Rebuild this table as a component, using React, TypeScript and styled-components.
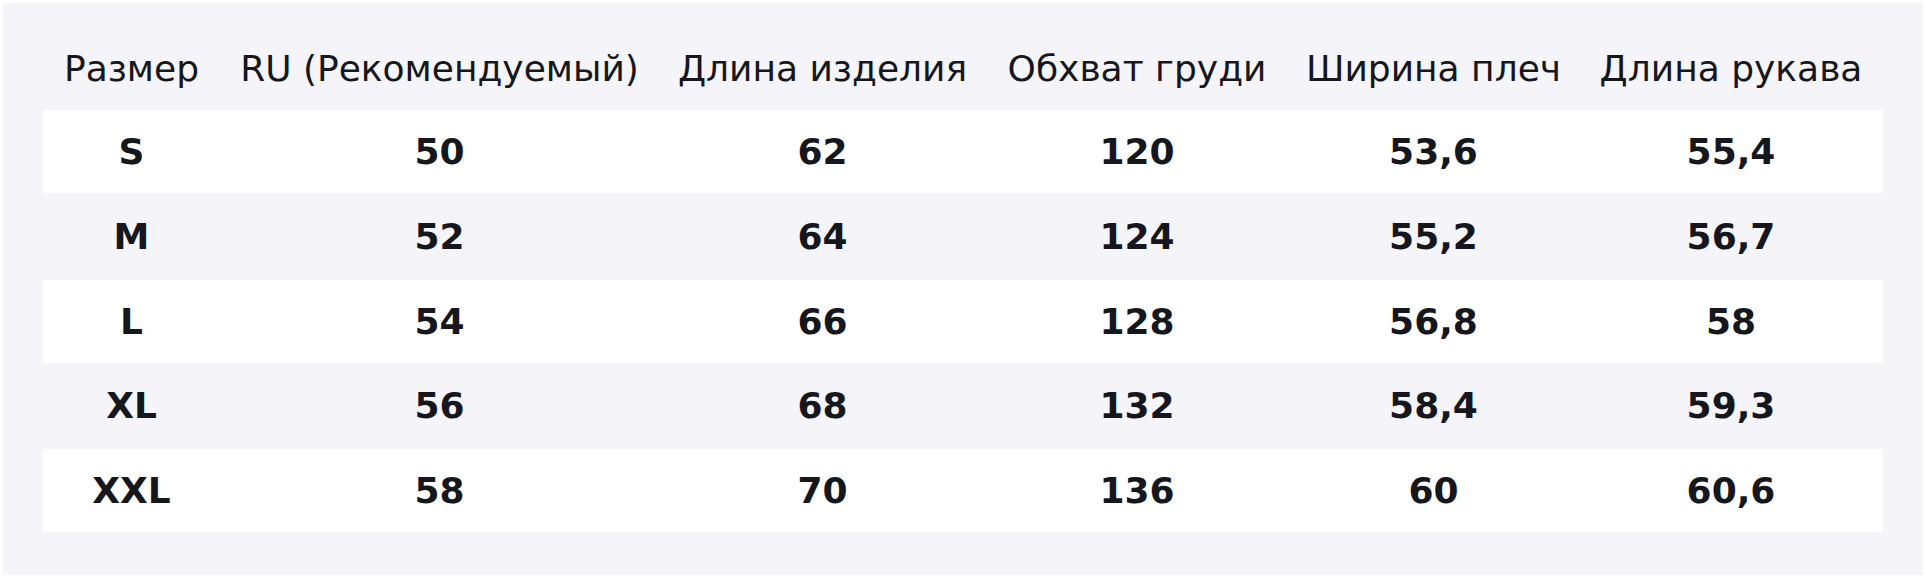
import styled, { createGlobalStyle } from "styled-components";

const GlobalStyle = createGlobalStyle`
  html, body {
    margin: 0;
    padding: 0;
    background: #ffffff;
  }

  body {
    padding: 3px;
    font-family: "DejaVu Sans", Verdana, sans-serif;
    color: #16161d;
  }
`;

const Panel = styled.section`
  width: 1920px;
  height: 572px;
  box-sizing: border-box;
  padding: 24px 40px 0;
  background: #f4f4f9;
`;

const Table = styled.table`
  width: 100%;
  table-layout: fixed;
  border-collapse: collapse;
  border-spacing: 0;
`;

const HeadCell = styled.th`
  height: 83px;
  padding: 0;
  font-size: 36px;
  font-weight: 400;
  text-align: center;
  vertical-align: middle;
  white-space: nowrap;
`;

const Row = styled.tr<{ $light: boolean }>`
  background: ${({ $light }) => ($light ? "#ffffff" : "transparent")};

  td {
    height: ${({ $light }) => ($light ? "83px" : "86.5px")};
  }
`;

const Cell = styled.td`
  padding: 0;
  font-size: 36px;
  font-weight: 700;
  text-align: center;
  vertical-align: middle;
  white-space: nowrap;
`;

const columns = [
  { title: "Размер", width: 177 },
  { title: "RU (Рекомендуемый)", width: 439 },
  { title: "Длина изделия", width: 327 },
  { title: "Обхват груди", width: 302 },
  { title: "Ширина плеч", width: 291 },
  { title: "Длина рукава", width: 304 },
];

const rows = [
  ["S", "50", "62", "120", "53,6", "55,4"],
  ["M", "52", "64", "124", "55,2", "56,7"],
  ["L", "54", "66", "128", "56,8", "58"],
  ["XL", "56", "68", "132", "58,4", "59,3"],
  ["XXL", "58", "70", "136", "60", "60,6"],
];

export default function App() {
  return (
    <>
      <GlobalStyle />
      <Panel>
        <Table>
          <colgroup>
            {columns.map((col) => (
              <col key={col.title} style={{ width: col.width }} />
            ))}
          </colgroup>
          <thead>
            <tr>
              {columns.map((col) => (
                <HeadCell key={col.title}>{col.title}</HeadCell>
              ))}
            </tr>
          </thead>
          <tbody>
            {rows.map((row, index) => (
              <Row key={row[0]} $light={index % 2 === 0}>
                {row.map((value, i) => (
                  <Cell key={i}>{value}</Cell>
                ))}
              </Row>
            ))}
          </tbody>
        </Table>
      </Panel>
    </>
  );
}
